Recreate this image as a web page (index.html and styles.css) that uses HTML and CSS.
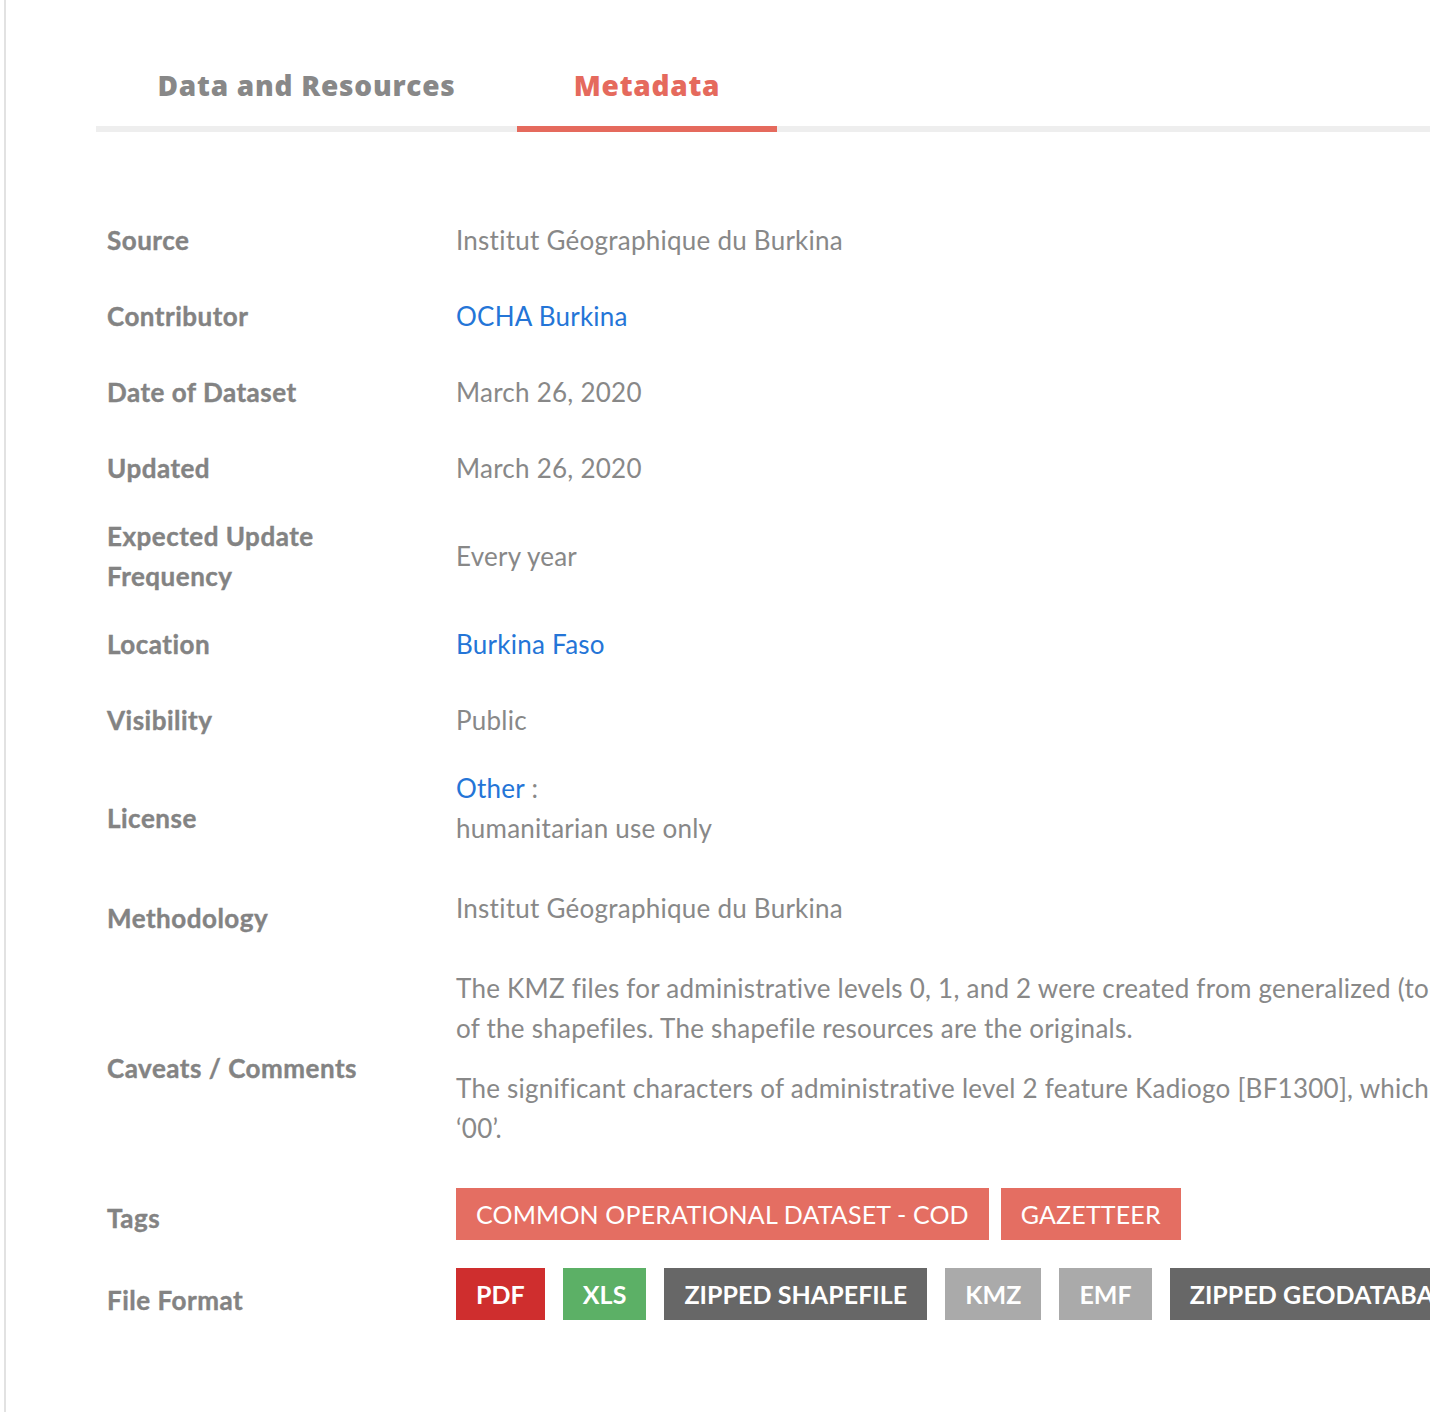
FILE: index.html
```html
<!DOCTYPE html>
<html lang="en">
<head>
<meta charset="utf-8">
<title>Metadata</title>
<link rel="stylesheet" href="styles.css">
</head>
<body>
<div class="page">
  <div class="tabs">
    <div class="tab tab-data">Data and Resources</div>
    <div class="tab tab-meta active">Metadata</div>
  </div>
  <div class="meta">
    <div class="row">
      <div class="label">Source</div>
      <div class="value">Institut Géographique du Burkina</div>
    </div>
    <div class="row">
      <div class="label">Contributor</div>
      <div class="value"><a class="link" href="#">OCHA Burkina</a></div>
    </div>
    <div class="row">
      <div class="label">Date of Dataset</div>
      <div class="value">March 26, 2020</div>
    </div>
    <div class="row">
      <div class="label">Updated</div>
      <div class="value">March 26, 2020</div>
    </div>
    <div class="row">
      <div class="label">Expected Update<br>Frequency</div>
      <div class="value">Every year</div>
    </div>
    <div class="row">
      <div class="label">Location</div>
      <div class="value"><a class="link" href="#">Burkina Faso</a></div>
    </div>
    <div class="row">
      <div class="label">Visibility</div>
      <div class="value">Public</div>
    </div>
    <div class="row">
      <div class="label">License</div>
      <div class="value"><p class="para"><a class="link" href="#">Other</a> :<br>humanitarian use only</p></div>
    </div>
    <div class="row">
      <div class="label">Methodology</div>
      <div class="value"><p class="para">Institut Géographique du Burkina</p></div>
    </div>
    <div class="row">
      <div class="label">Caveats / Comments</div>
      <div class="value">
        <p class="para">The KMZ files for administrative levels 0, 1, and 2 were created from generalized (tolerance 0.0001) versions<br>of the shapefiles. The shapefile resources are the originals.</p>
        <p class="para">The significant characters of administrative level 2 feature Kadiogo [BF1300], which is the same as level 1,<br>‘00’.</p>
      </div>
    </div>
    <div class="row">
      <div class="label">Tags</div>
      <div class="value chips tags">
        <span class="chip tag">COMMON OPERATIONAL DATASET - COD</span>
        <span class="chip tag">GAZETTEER</span>
      </div>
    </div>
    <div class="row">
      <div class="label">File Format</div>
      <div class="value chips formats">
        <span class="chip fmt pdf">PDF</span>
        <span class="chip fmt xls">XLS</span>
        <span class="chip fmt dark">ZIPPED SHAPEFILE</span>
        <span class="chip fmt light">KMZ</span>
        <span class="chip fmt light">EMF</span>
        <span class="chip fmt dark">ZIPPED GEODATABASE</span>
      </div>
    </div>
  </div>
</div>
</body>
</html>
```

FILE: styles.css
```css
html, body {
  margin: 0;
  padding: 0;
  background: #ffffff;
  overflow: hidden;
}

body {
  font-family: "Lato", "Liberation Sans", sans-serif;
  color: #888888;
}

.page {
  margin-left: 4px;
  border-left: 2px solid #e2e2e2;
  padding-left: 90px;
  min-height: 1412px;
  box-sizing: border-box;
  width: 2000px;
}

.tabs {
  display: flex;
  border-bottom: 6px solid #eeeeee;
  padding-top: 65px;
}

.tab {
  font-family: "Open Sans", "Lato", sans-serif;
  font-weight: 800;
  font-size: 28px;
  letter-spacing: 0.75px;
  line-height: 40px;
  text-align: center;
  color: #888888;
  padding-bottom: 21px;
  margin-bottom: -6px;
  border-bottom: 6px solid transparent;
}

.tab-data {
  width: 421px;
}

.tab-meta {
  width: 260px;
}

.tab.active {
  color: #e56a5d;
  border-bottom-color: #e56a5d;
}

.meta {
  margin-top: 70px;
}

.row {
  display: grid;
  grid-template-columns: 349px 1fr;
  padding: 10px 0 10px 11px;
  white-space: nowrap;
}

.label {
  font-weight: 700;
  font-size: 26px;
  letter-spacing: 0.5px;
  line-height: 40px;
  min-height: 56px;
  display: flex;
  align-items: center;
  color: #838383;
  -webkit-text-stroke: 0.4px #838383;
}

.value {
  font-size: 26px;
  letter-spacing: 0.25px;
  line-height: 40px;
  min-height: 56px;
  display: flex;
  flex-direction: column;
  justify-content: center;
  color: #888888;
}

.para {
  margin: 0 0 20px 0;
}

.link {
  color: #2475d7;
  text-decoration: none;
}

.chips {
  flex-direction: row;
  justify-content: flex-start;
  align-items: flex-start;
  gap: 12px;
  padding-bottom: 8px;
}

.tags {
  padding-bottom: 4px;
}

.formats {
  gap: 18px;
}

.chip {
  display: inline-block;
  height: 52px;
  line-height: 52px;
  padding: 0 20px;
  color: #ffffff;
  font-size: 25px;
  letter-spacing: 0.15px;
}

.tag {
  background: #e46e62;
}

.fmt {
  font-weight: 700;
  letter-spacing: 0.05px;
}

.pdf { background: #cf2e2e; }
.xls { background: #5cb066; }
.dark { background: #676767; }
.light { background: #aaaaaa; }
```
